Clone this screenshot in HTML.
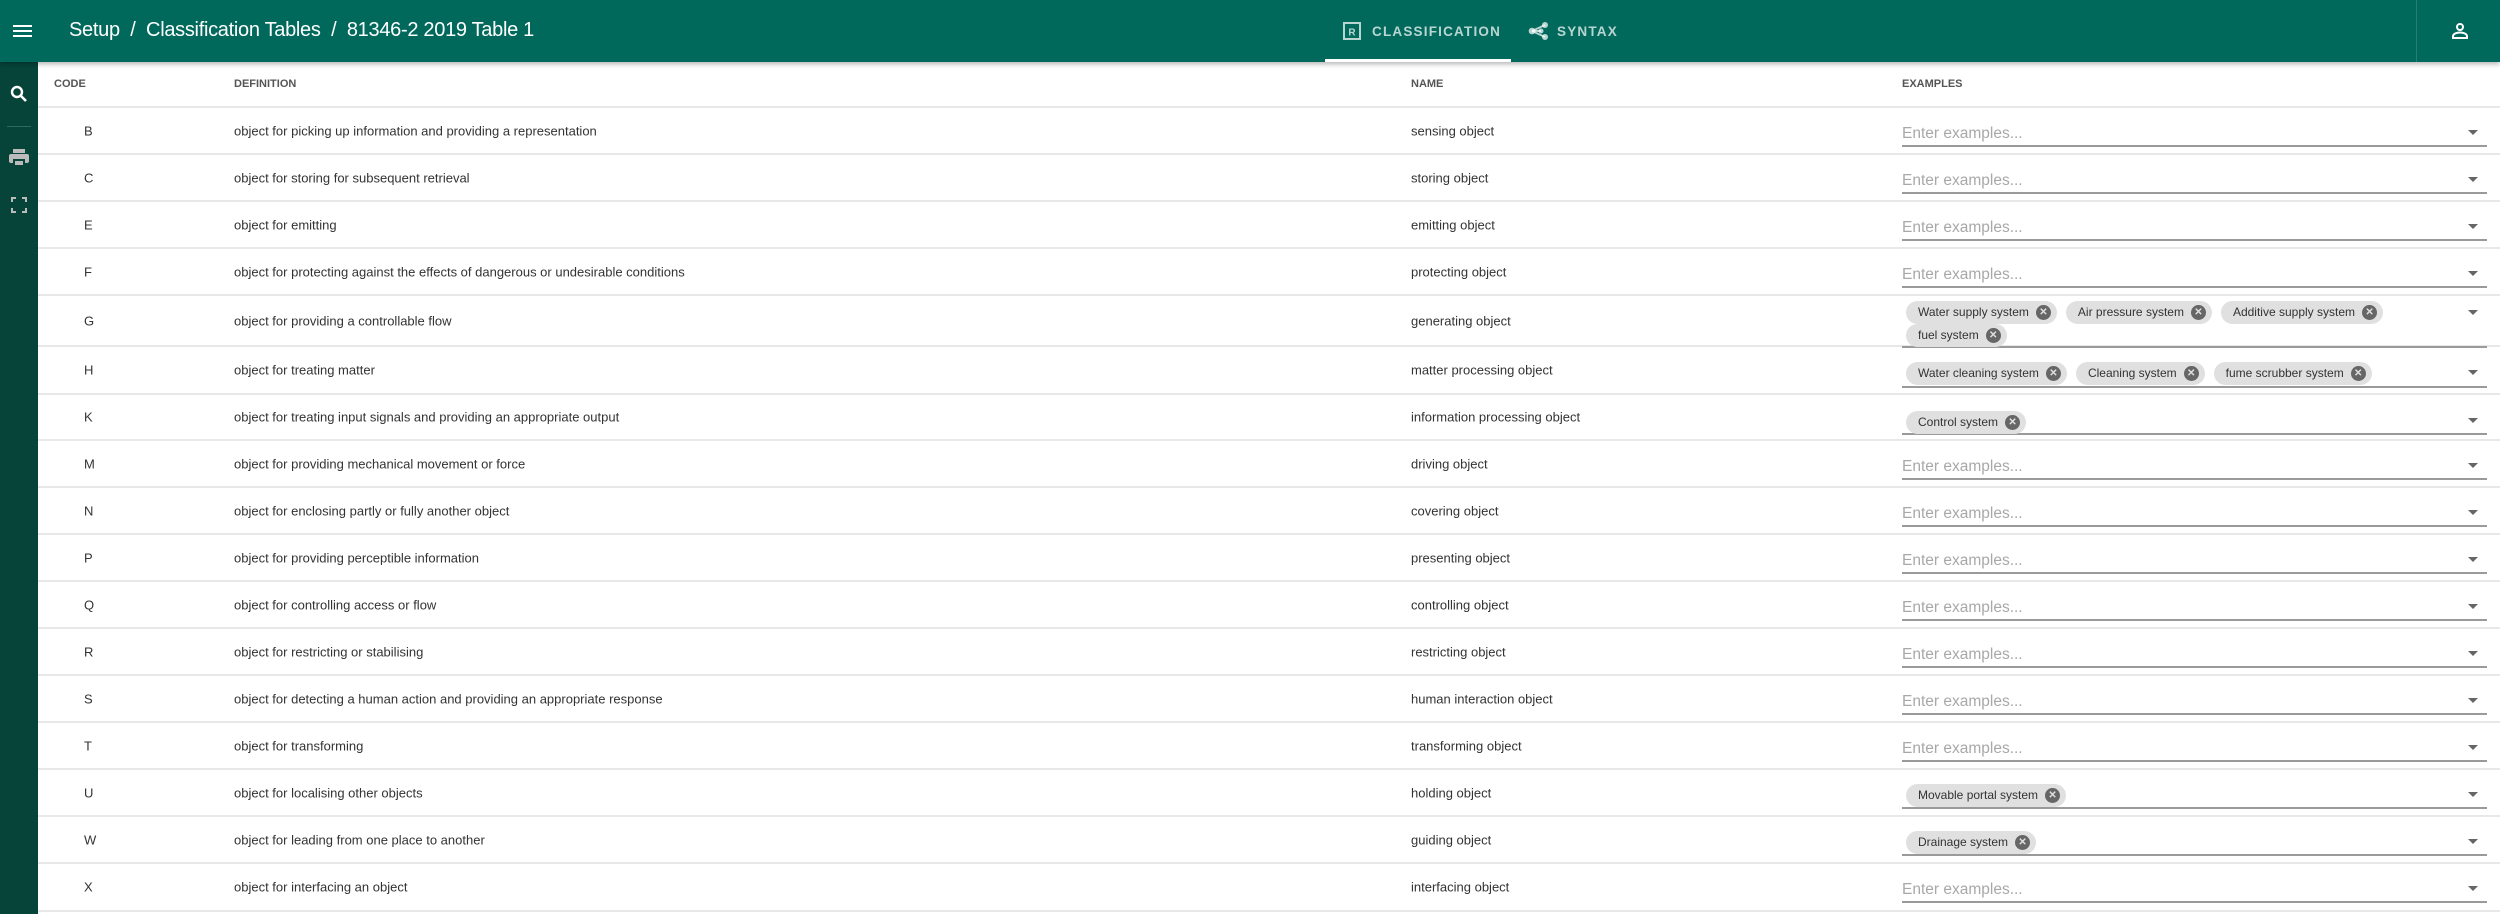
<!DOCTYPE html>
<html><head><meta charset="utf-8"><style>
*{margin:0;padding:0;box-sizing:border-box}
body{width:2500px;height:914px;overflow:hidden;background:#fff;font-family:"Liberation Sans",sans-serif;position:relative;color:#333}
.hdr{position:absolute;left:0;top:0;width:2500px;height:62px;background:#00695c;box-shadow:0 2px 5px rgba(0,0,0,.3);z-index:3}
.side{position:absolute;left:0;top:62px;width:38px;height:852px;background:#06443a;z-index:2}
.title{position:absolute;left:69px;top:19px;color:#fff;font-size:20px;letter-spacing:-0.3px}
.tab{position:absolute;top:24px;color:rgba(255,255,255,.72);font-size:13.5px;font-weight:bold;letter-spacing:1.2px}
.row{position:absolute;left:38px;width:2462px;border-bottom:2px solid #e8e8e8}
.t{position:absolute;font-size:13px;color:#333;top:50%;transform:translateY(-50%);white-space:nowrap}
.th{position:absolute;font-size:11px;font-weight:bold;color:#555;top:50%;transform:translateY(-50%)}
.inp{position:absolute;left:1864px;width:585px;border-bottom:2px solid #9a9a9a}
.ph{position:absolute;left:0;font-size:15.5px;color:#a8a8a8}
.arr{position:absolute;right:9px;width:0;height:0;border-left:5px solid transparent;border-right:5px solid transparent;border-top:5px solid #666}
.chips{position:absolute;left:4px;top:0;width:500px;display:flex;flex-wrap:wrap;gap:0 9px}
.chip{position:relative;height:23px;border-radius:12px;background:#e0e0e0;font-size:12px;color:#333;line-height:23px;padding:0 28px 0 12px;white-space:nowrap}
.chip i{position:absolute;right:6px;top:4px;width:15px;height:15px;border-radius:50%;background:#666;color:#e0e0e0;font-style:normal;font-size:10px;font-weight:bold;line-height:15px;text-align:center}
</style></head><body>
<div class="hdr">
<svg style="position:absolute;left:13px;top:23px" width="20" height="16" viewBox="0 0 20 16"><rect y="2" width="19" height="2" fill="#fff"/><rect y="7" width="19" height="2" fill="#fff"/><rect y="12" width="19" height="2" fill="#fff"/></svg>
<div class="title">Setup &nbsp;/&nbsp; Classification Tables &nbsp;/&nbsp; 81346-2 2019 Table 1</div>
<svg style="position:absolute;left:1343px;top:22px" width="18" height="18" viewBox="0 0 18 18"><rect x="1" y="1" width="16" height="16" fill="none" stroke="rgba(255,255,255,.72)" stroke-width="2"/><text x="9" y="13.5" font-size="10" font-weight="bold" text-anchor="middle" fill="rgba(255,255,255,.72)" font-family="Liberation Sans">R</text></svg>
<div class="tab" style="left:1372px">CLASSIFICATION</div>
<div style="position:absolute;left:1325px;top:59px;width:186px;height:3px;background:#fff"></div>
<svg style="position:absolute;left:1528px;top:21px" width="22" height="20" viewBox="0 0 22 20"><g fill="rgba(255,255,255,.72)"><circle cx="17" cy="4" r="3"/><circle cx="4" cy="10" r="3.3"/><circle cx="17" cy="16" r="3"/><circle cx="13" cy="10" r="2.5"/></g><g stroke="rgba(255,255,255,.72)" stroke-width="2"><line x1="4" y1="10" x2="17" y2="4"/><line x1="4" y1="10" x2="17" y2="16"/><line x1="4" y1="10" x2="13" y2="10"/></g></svg>
<div class="tab" style="left:1557px">SYNTAX</div>
<div style="position:absolute;left:2416px;top:0;width:1px;height:62px;background:rgba(255,255,255,.15)"></div>
<svg style="position:absolute;left:2451px;top:22px" width="18" height="18" viewBox="0 0 18 18"><circle cx="9" cy="5" r="3" fill="none" stroke="#fff" stroke-width="2"/><path d="M2 16 v-1.5 c0-3 4-4 7-4 s7 1 7 4 V16 z" fill="none" stroke="#fff" stroke-width="2"/></svg>
</div>
<div class="side">
<svg style="position:absolute;left:9px;top:22px" width="20" height="20" viewBox="0 0 20 20"><circle cx="8" cy="8" r="5" fill="none" stroke="#fff" stroke-width="2.4"/><line x1="11.5" y1="11.5" x2="17" y2="17" stroke="#fff" stroke-width="2.6"/></svg>
<div style="position:absolute;left:7px;top:64px;width:24px;height:1px;background:#2b6a5c"></div>
<svg style="position:absolute;left:8px;top:86px" width="22" height="20" viewBox="0 0 22 20"><rect x="5" y="1" width="12" height="4" fill="#bbb"/><rect x="1" y="6" width="20" height="9" rx="2" fill="#bbb"/><rect x="5" y="11" width="12" height="7" fill="#06443a"/><rect x="7" y="13" width="8" height="4" fill="#bbb"/></svg>
<svg style="position:absolute;left:11px;top:135px" width="16" height="16" viewBox="0 0 16 16"><path d="M1 5V1h4M11 1h4v4M15 11v4h-4M5 15H1v-4" fill="none" stroke="#bbb" stroke-width="2"/></svg>
</div>

<div class="row" style="top:62px;height:46px"><div class="th" style="left:16px">CODE</div><div class="th" style="left:196px">DEFINITION</div><div class="th" style="left:1373px">NAME</div><div class="th" style="left:1864px">EXAMPLES</div></div>

<div class="row" style="top:108px;height:47px"><div class="t" style="left:46px">B</div><div class="t" style="left:196px">object for picking up information and providing a representation</div><div class="t" style="left:1373px">sensing object</div><div class="inp" style="top:9px;height:30px"><div class="ph" style="top:8px">Enter examples...</div><div class="arr" style="top:13px"></div></div></div>
<div class="row" style="top:155px;height:47px"><div class="t" style="left:46px">C</div><div class="t" style="left:196px">object for storing for subsequent retrieval</div><div class="t" style="left:1373px">storing object</div><div class="inp" style="top:9px;height:30px"><div class="ph" style="top:8px">Enter examples...</div><div class="arr" style="top:13px"></div></div></div>
<div class="row" style="top:202px;height:47px"><div class="t" style="left:46px">E</div><div class="t" style="left:196px">object for emitting</div><div class="t" style="left:1373px">emitting object</div><div class="inp" style="top:9px;height:30px"><div class="ph" style="top:8px">Enter examples...</div><div class="arr" style="top:13px"></div></div></div>
<div class="row" style="top:249px;height:47px"><div class="t" style="left:46px">F</div><div class="t" style="left:196px">object for protecting against the effects of dangerous or undesirable conditions</div><div class="t" style="left:1373px">protecting object</div><div class="inp" style="top:9px;height:30px"><div class="ph" style="top:8px">Enter examples...</div><div class="arr" style="top:13px"></div></div></div>
<div class="row" style="top:296px;height:51px"><div class="t" style="left:46px">G</div><div class="t" style="left:196px">object for providing a controllable flow</div><div class="t" style="left:1373px">generating object</div><div class="inp" style="top:0;height:52px">
<div class="chips" style="top:5px;width:520px"><div class="chip">Water supply system<i>✕</i></div><div class="chip">Air pressure system<i>✕</i></div><div class="chip">Additive supply system<i>✕</i></div><div class="chip">fuel system<i>✕</i></div></div>
<div class="arr" style="top:14px"></div></div></div>
<div class="row" style="top:347px;height:48px"><div class="t" style="left:46px">H</div><div class="t" style="left:196px">object for treating matter</div><div class="t" style="left:1373px">matter processing object</div><div class="inp" style="top:9px;height:32px">
<div class="chips" style="top:6px"><div class="chip">Water cleaning system<i>✕</i></div><div class="chip">Cleaning system<i>✕</i></div><div class="chip">fume scrubber system<i>✕</i></div></div>
<div class="arr" style="top:14px"></div></div></div>
<div class="row" style="top:395px;height:46px"><div class="t" style="left:46px">K</div><div class="t" style="left:196px">object for treating input signals and providing an appropriate output</div><div class="t" style="left:1373px">information processing object</div><div class="inp" style="top:8px;height:32px">
<div class="chips" style="top:8px"><div class="chip">Control system<i>✕</i></div></div>
<div class="arr" style="top:15px"></div></div></div>
<div class="row" style="top:441px;height:47px"><div class="t" style="left:46px">M</div><div class="t" style="left:196px">object for providing mechanical movement or force</div><div class="t" style="left:1373px">driving object</div><div class="inp" style="top:9px;height:30px"><div class="ph" style="top:8px">Enter examples...</div><div class="arr" style="top:13px"></div></div></div>
<div class="row" style="top:488px;height:47px"><div class="t" style="left:46px">N</div><div class="t" style="left:196px">object for enclosing partly or fully another object</div><div class="t" style="left:1373px">covering object</div><div class="inp" style="top:9px;height:30px"><div class="ph" style="top:8px">Enter examples...</div><div class="arr" style="top:13px"></div></div></div>
<div class="row" style="top:535px;height:47px"><div class="t" style="left:46px">P</div><div class="t" style="left:196px">object for providing perceptible information</div><div class="t" style="left:1373px">presenting object</div><div class="inp" style="top:9px;height:30px"><div class="ph" style="top:8px">Enter examples...</div><div class="arr" style="top:13px"></div></div></div>
<div class="row" style="top:582px;height:47px"><div class="t" style="left:46px">Q</div><div class="t" style="left:196px">object for controlling access or flow</div><div class="t" style="left:1373px">controlling object</div><div class="inp" style="top:9px;height:30px"><div class="ph" style="top:8px">Enter examples...</div><div class="arr" style="top:13px"></div></div></div>
<div class="row" style="top:629px;height:47px"><div class="t" style="left:46px">R</div><div class="t" style="left:196px">object for restricting or stabilising</div><div class="t" style="left:1373px">restricting object</div><div class="inp" style="top:9px;height:30px"><div class="ph" style="top:8px">Enter examples...</div><div class="arr" style="top:13px"></div></div></div>
<div class="row" style="top:676px;height:47px"><div class="t" style="left:46px">S</div><div class="t" style="left:196px">object for detecting a human action and providing an appropriate response</div><div class="t" style="left:1373px">human interaction object</div><div class="inp" style="top:9px;height:30px"><div class="ph" style="top:8px">Enter examples...</div><div class="arr" style="top:13px"></div></div></div>
<div class="row" style="top:723px;height:47px"><div class="t" style="left:46px">T</div><div class="t" style="left:196px">object for transforming</div><div class="t" style="left:1373px">transforming object</div><div class="inp" style="top:9px;height:30px"><div class="ph" style="top:8px">Enter examples...</div><div class="arr" style="top:13px"></div></div></div>
<div class="row" style="top:770px;height:47px"><div class="t" style="left:46px">U</div><div class="t" style="left:196px">object for localising other objects</div><div class="t" style="left:1373px">holding object</div><div class="inp" style="top:9px;height:30px">
<div class="chips" style="top:5px"><div class="chip">Movable portal system<i>✕</i></div></div>
<div class="arr" style="top:13px"></div></div></div>
<div class="row" style="top:817px;height:47px"><div class="t" style="left:46px">W</div><div class="t" style="left:196px">object for leading from one place to another</div><div class="t" style="left:1373px">guiding object</div><div class="inp" style="top:9px;height:30px">
<div class="chips" style="top:5px"><div class="chip">Drainage system<i>✕</i></div></div>
<div class="arr" style="top:13px"></div></div></div>
<div class="row" style="top:864px;height:48px"><div class="t" style="left:46px">X</div><div class="t" style="left:196px">object for interfacing an object</div><div class="t" style="left:1373px">interfacing object</div><div class="inp" style="top:9px;height:30px"><div class="ph" style="top:8px">Enter examples...</div><div class="arr" style="top:13px"></div></div></div>
</body></html>
